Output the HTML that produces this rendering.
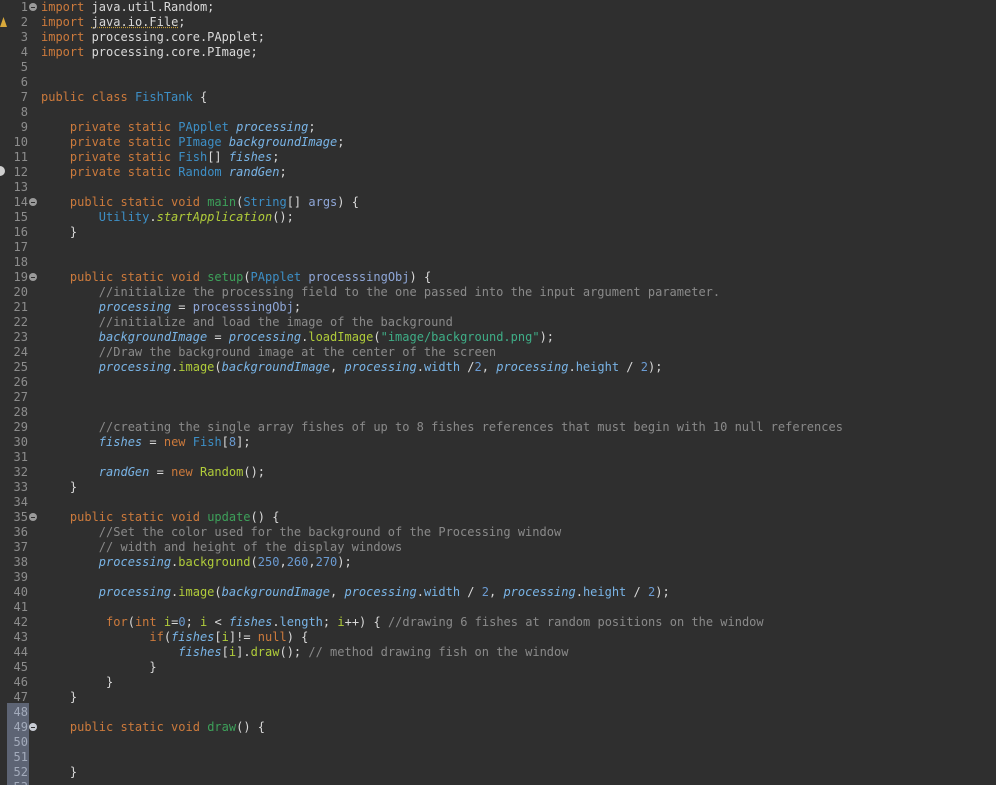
<!DOCTYPE html>
<html><head><meta charset="utf-8">
<style>
html,body{margin:0;padding:0;background:#2f2f2f;width:996px;height:785px;overflow:hidden}
body{position:relative;font-family:"DejaVu Sans Mono","Liberation Mono",monospace;font-size:12px;color:#d9d9d9}
.ln{position:absolute;left:0;width:28px;text-align:right;color:#8d8d8d;height:15px;line-height:15px}
.c{position:absolute;left:41px;white-space:pre;height:15px;line-height:15px}
.k{color:#cc7a3c}.t{color:#3d8fc6}.f{color:#79b4e6;font-style:italic}.fa{color:#79b4e6}
.md{color:#3da05a}.mc{color:#b0cc3a}.ms{color:#b0cc3a;font-style:italic}
.cm{color:#8a8a8a}.s{color:#3fae87}.n{color:#6b9bd2}.p{color:#8fa7d8}.lv{color:#c8c8c8}
.sel{position:absolute;left:7px;top:703px;width:22px;height:82px;background:#5d6474}
.ln.sl{color:#a3abbb}
.fold{position:absolute;left:29px;width:8px;height:8px;border-radius:50%;background:#9a9a9a}
.fold:after{content:"";position:absolute;left:2px;top:3.5px;width:4px;height:1px;background:#2f2f2f}
.u{text-decoration:underline dotted #c8a03a}
</style></head><body>
<div class="sel"></div>
<div id="g"></div>
<div style="position:absolute;left:0;top:17px;width:7px;height:10px;background:#d9a93b;clip-path:polygon(0 100%,50% 0,100% 100%)"></div>
<div style="position:absolute;left:0;top:166px;width:5px;height:10px;background:#cfcfcf;border-radius:0 5px 5px 0"></div>
<div class="fold" style="top:3px"></div>
<div class="fold" style="top:198px"></div>
<div class="fold" style="top:273px"></div>
<div class="fold" style="top:513px"></div>
<div class="fold" style="top:723px;background:#c8ccd4"></div>
<script>
var L=[
'<span class="k">import</span> java.util.Random;',
'<span class="k">import</span> <span class="u">java.io.File</span>;',
'<span class="k">import</span> processing.core.PApplet;',
'<span class="k">import</span> processing.core.PImage;',
'','',
'<span class="k">public class</span> <span class="t">FishTank</span> {',
'',
'    <span class="k">private static</span> <span class="t">PApplet</span> <span class="f">processing</span>;',
'    <span class="k">private static</span> <span class="t">PImage</span> <span class="f">backgroundImage</span>;',
'    <span class="k">private static</span> <span class="t">Fish</span>[] <span class="f">fishes</span>;',
'    <span class="k">private static</span> <span class="t">Random</span> <span class="f">randGen</span>;',
'',
'    <span class="k">public static void</span> <span class="md">main</span>(<span class="t">String</span>[] <span class="p">args</span>) {',
'        <span class="t">Utility</span>.<span class="ms">startApplication</span>();',
'    }',
'','',
'    <span class="k">public static void</span> <span class="md">setup</span>(<span class="t">PApplet</span> <span class="p">processsingObj</span>) {',
'        <span class="cm">//initialize the processing field to the one passed into the input argument parameter.</span>',
'        <span class="f">processing</span> = <span class="p">processsingObj</span>;',
'        <span class="cm">//initialize and load the image of the background</span>',
'        <span class="f">backgroundImage</span> = <span class="f">processing</span>.<span class="mc">loadImage</span>(<span class="s">"image/background.png"</span>);',
'        <span class="cm">//Draw the background image at the center of the screen</span>',
'        <span class="f">processing</span>.<span class="mc">image</span>(<span class="f">backgroundImage</span>, <span class="f">processing</span>.<span class="fa">width</span> /<span class="n">2</span>, <span class="f">processing</span>.<span class="fa">height</span> / <span class="n">2</span>);',
'','','',
'        <span class="cm">//creating the single array fishes of up to 8 fishes references that must begin with 10 null references</span>',
'        <span class="f">fishes</span> = <span class="k">new</span> <span class="t">Fish</span>[<span class="n">8</span>];',
'',
'        <span class="f">randGen</span> = <span class="k">new</span> <span class="mc">Random</span>();',
'    }',
'',
'    <span class="k">public static void</span> <span class="md">update</span>() {',
'        <span class="cm">//Set the color used for the background of the Processing window</span>',
'        <span class="cm">// width and height of the display windows</span>',
'        <span class="f">processing</span>.<span class="mc">background</span>(<span class="n">250</span>,<span class="n">260</span>,<span class="n">270</span>);',
'',
'        <span class="f">processing</span>.<span class="mc">image</span>(<span class="f">backgroundImage</span>, <span class="f">processing</span>.<span class="fa">width</span> / <span class="n">2</span>, <span class="f">processing</span>.<span class="fa">height</span> / <span class="n">2</span>);',
'',
'         <span class="k">for</span>(<span class="k">int</span> <span class="mc">i</span>=<span class="n">0</span>; <span class="mc">i</span> &lt; <span class="f">fishes</span>.<span class="fa">length</span>; <span class="mc">i</span>++) { <span class="cm">//drawing 6 fishes at random positions on the window</span>',
'               <span class="k">if</span>(<span class="f">fishes</span>[<span class="mc">i</span>]!= <span class="k">null</span>) {',
'                   <span class="f">fishes</span>[<span class="mc">i</span>].<span class="mc">draw</span>(); <span class="cm">// method drawing fish on the window</span>',
'               }',
'         }',
'    }',
'',
'    <span class="k">public static void</span> <span class="md">draw</span>() {',
'','',
'    }',
''
];
var h='';
for(var i=0;i<L.length;i++){
 var y=i*15;
 h+='<div class="ln'+(i>=47?' sl':'')+'" style="top:'+y+'px">'+(i+1)+'</div>';
 h+='<div class="c" style="top:'+y+'px">'+L[i]+'</div>';
}
document.getElementById('g').innerHTML=h;
</script>
</body></html>
